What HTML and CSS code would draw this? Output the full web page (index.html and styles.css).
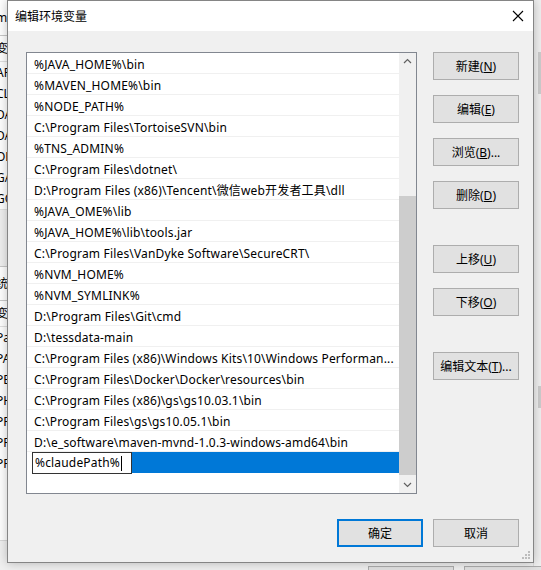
FILE: index.html
```html
<!DOCTYPE html>
<html lang="zh-CN">
<head>
    <meta charset="UTF-8">
    <meta name="viewport" content="width=device-width, initial-scale=1.0">
    <title>编辑环境变量</title>
    <link rel="stylesheet" href="styles.css">
</head>
<body>

    <div class="desktop">

        <!-- parent window peeking out on the left -->
        <div class="back-left">
            <div class="bl-title">m</div>
            <div class="bl-head">变</div>
            <div class="bl-row">AP</div>
            <div class="bl-row">CL</div>
            <div class="bl-row">DA</div>
            <div class="bl-row">DA</div>
            <div class="bl-row">OE</div>
            <div class="bl-row">GA</div>
            <div class="bl-row">GO</div>
            <div class="bl-gap"></div>
            <div class="bl-group">统</div>
            <div class="bl-head">变</div>
            <div class="bl-row">Pa</div>
            <div class="bl-row">PA</div>
            <div class="bl-row">PE</div>
            <div class="bl-row">PH</div>
            <div class="bl-row">PR</div>
            <div class="bl-row">PR</div>
            <div class="bl-row">PR</div>
        </div>

        <!-- parent window peeking out on the right -->
        <div class="back-right">
            <div class="br-bar br-top"></div>
            <div class="br-bar br-mid"></div>
        </div>

        <div class="back-buttons">
            <span class="back-btn"></span>
            <span class="back-btn"></span>
        </div>

        <div class="dialog">
            <div class="titlebar">
                <span class="title">编辑环境变量</span>
                <svg class="close" width="12" height="12" viewBox="0 0 12 12">
                    <path d="M1 1 L11 11 M11 1 L1 11" stroke="#000" stroke-width="1.1" fill="none"/>
                </svg>
            </div>

            <div class="content">
                <div class="main">
                    <div class="listbox">
                        <ul class="items" id="items">
                            <li>%JAVA_HOME%\bin</li>
                            <li>%MAVEN_HOME%\bin</li>
                            <li>%NODE_PATH%</li>
                            <li>C:\Program Files\TortoiseSVN\bin</li>
                            <li>%TNS_ADMIN%</li>
                            <li>C:\Program Files\dotnet\</li>
                            <li>D:\Program Files (x86)\Tencent\微信web开发者工具\dll</li>
                            <li>%JAVA_OME%\lib</li>
                            <li>%JAVA_HOME%\lib\tools.jar</li>
                            <li>C:\Program Files\VanDyke Software\SecureCRT\</li>
                            <li>%NVM_HOME%</li>
                            <li>%NVM_SYMLINK%</li>
                            <li>D:\Program Files\Git\cmd</li>
                            <li>D:\tessdata-main</li>
                            <li>C:\Program Files (x86)\Windows Kits\10\Windows Performan...</li>
                            <li>C:\Program Files\Docker\Docker\resources\bin</li>
                            <li>C:\Program Files (x86)\gs\gs10.03.1\bin</li>
                            <li>C:\Program Files\gs\gs10.05.1\bin</li>
                            <li>D:\e_software\maven-mvnd-1.0.3-windows-amd64\bin</li>
                            <li class="editing">
                                <span class="edit-box">%claudePath%<span class="caret"></span></span>
                                <span class="selected-fill"></span>
                            </li>
                        </ul>
                        <div class="scrollbar">
                            <svg class="arrow" width="17" height="17" viewBox="0 0 17 17">
                                <path d="M5 10 L8.5 6.5 L12 10" stroke="#606060" stroke-width="1.2" fill="none"/>
                            </svg>
                            <div class="track">
                                <div class="thumb"></div>
                            </div>
                            <svg class="arrow" width="17" height="17" viewBox="0 0 17 17">
                                <path d="M5 7 L8.5 10.5 L12 7" stroke="#606060" stroke-width="1.2" fill="none"/>
                            </svg>
                        </div>
                    </div>

                    <div class="side">
                        <button class="btn">新建(<u>N</u>)</button>
                        <button class="btn">编辑(<u>E</u>)</button>
                        <button class="btn">浏览(<u>B</u>)...</button>
                        <button class="btn">删除(<u>D</u>)</button>
                        <button class="btn gap-before">上移(<u>U</u>)</button>
                        <button class="btn">下移(<u>O</u>)</button>
                        <button class="btn gap-before">编辑文本(<u>T</u>)...</button>
                    </div>
                </div>

                <div class="footer">
                    <button class="btn btn-default">确定</button>
                    <button class="btn">取消</button>
                </div>
            </div>

            <svg class="grip" width="10" height="10" viewBox="0 0 10 10">
                <rect x="7" y="1" width="2" height="2" fill="#bcbcbc"/>
                <rect x="4" y="4" width="2" height="2" fill="#bcbcbc"/>
                <rect x="7" y="4" width="2" height="2" fill="#bcbcbc"/>
                <rect x="1" y="7" width="2" height="2" fill="#bcbcbc"/>
                <rect x="4" y="7" width="2" height="2" fill="#bcbcbc"/>
                <rect x="7" y="7" width="2" height="2" fill="#bcbcbc"/>
            </svg>
        </div>

    </div>

</body>
</html>
```

FILE: styles.css
```css
body {
    margin: 0;
    background-color: #f0f0f0;
    font-family: "Noto Sans", "Noto Sans CJK SC", sans-serif;
    font-size: 12px;
    color: #000000;
    overflow: hidden;
}
.desktop {
    position: relative;
    width: 541px;
    height: 570px;
    overflow: hidden;
}

/* windows behind the dialog */
.back-left {
    position: absolute;
    left: -40px;
    top: 0;
    width: 47px;
    height: 540px;
    background-color: #ffffff;
    border-bottom: 1px solid #d8d8d8;
}
.back-left div {
    box-sizing: border-box;
    padding-left: 36px;
    white-space: nowrap;
}
.bl-title {
    height: 36px;
    line-height: 36px;
    border-bottom: 1px solid #c8c8c8;
}
.bl-head {
    height: 26px;
    line-height: 26px;
    border-bottom: 1px solid #e0e0e0;
}
.bl-row {
    height: 21px;
    line-height: 21px;
}
.bl-gap {
    height: 58px;
    background-color: #f0f0f0;
    border-top: 1px solid #e0e0e0;
    border-bottom: 1px solid #c8c8c8;
}
.bl-group {
    height: 34px;
    line-height: 34px;
    border-bottom: 1px solid #c8c8c8;
}
.back-right {
    position: absolute;
    left: 533px;
    top: 0;
    width: 8px;
    height: 570px;
    background-color: #f0f0f0;
    border-left: 1px solid #dcdcdc;
}
.br-bar {
    position: absolute;
    right: 0;
    width: 4px;
    background-color: #cdcdcd;
}
.br-top {
    top: 52px;
    height: 42px;
}
.br-mid {
    top: 386px;
    height: 22px;
}
.back-buttons {
    position: absolute;
    left: 368px;
    top: 566px;
    display: flex;
    gap: 10px;
}
.back-btn {
    width: 84px;
    height: 20px;
    background-color: #e1e1e1;
    border: 1px solid #adadad;
}

/* the dialog */
.dialog {
    position: absolute;
    left: 7px;
    top: 0;
    width: 527px;
    height: 563px;
    box-sizing: border-box;
    background-color: #f0f0f0;
    border: 1px solid #858585;
    box-shadow: 0 0 10px rgba(0, 0, 0, 0.25);
}
.titlebar {
    height: 30px;
    background-color: #ffffff;
    display: flex;
    align-items: center;
    justify-content: space-between;
    padding: 0 9px 0 7px;
}
.title {
    font-size: 12px;
    margin-top: -1px;
}
.close {
    display: block;
}
.content {
    padding: 21px 14px 0 18px;
}
.main {
    display: flex;
    gap: 16px;
}

/* path list */
.listbox {
    width: 391px;
    height: 442px;
    box-sizing: border-box;
    border: 1px solid #828790;
    background-color: #ffffff;
    display: flex;
}
.items {
    flex: 1;
    margin: 0;
    padding: 0;
    list-style: none;
    overflow: hidden;
}
.items li {
    height: 21px;
    line-height: 17px;
    box-sizing: border-box;
    padding: 3px 0 0 7px;
    border-bottom: 1px solid #f0f0f0;
    white-space: nowrap;
    letter-spacing: 0.17px;
}
.items li.editing {
    display: flex;
    padding: 0 0 0 5px;
    border-bottom: none;
    height: 22px;
}
.edit-box {
    width: 100px;
    height: 22px;
    box-sizing: border-box;
    border: 1px solid #333333;
    padding-left: 2px;
    line-height: 20px;
    display: flex;
    align-items: center;
}
.caret {
    display: inline-block;
    width: 1px;
    height: 15px;
    background-color: #000000;
    margin-left: 1px;
}
.selected-fill {
    flex: 1;
    height: 21px;
    background-color: #0078d7;
}
.scrollbar {
    width: 17px;
    background-color: #f0f0f0;
    display: flex;
    flex-direction: column;
}
.arrow {
    display: block;
}
.track {
    flex: 1;
    display: flex;
    flex-direction: column;
    justify-content: flex-end;
}
.thumb {
    height: 279px;
    margin-bottom: 1px;
    background-color: #cdcdcd;
}

/* buttons */
.side {
    display: flex;
    flex-direction: column;
    gap: 15px;
    width: 86px;
}
.btn {
    width: 86px;
    height: 28px;
    box-sizing: border-box;
    background-color: #e1e1e1;
    border: 1px solid #adadad;
    font-family: "Noto Sans", "Noto Sans CJK SC", sans-serif;
    font-size: 12px;
    color: #000000;
    padding: 0;
}
.btn u {
    text-decoration-thickness: 1px;
}
.gap-before {
    margin-top: 21px;
}
.footer {
    display: flex;
    justify-content: flex-end;
    gap: 10px;
    margin-top: 25px;
}
.btn-default {
    width: 86px;
    border: 2px solid #0078d7;
}
.grip {
    position: absolute;
    right: 2px;
    bottom: 2px;
}
```
